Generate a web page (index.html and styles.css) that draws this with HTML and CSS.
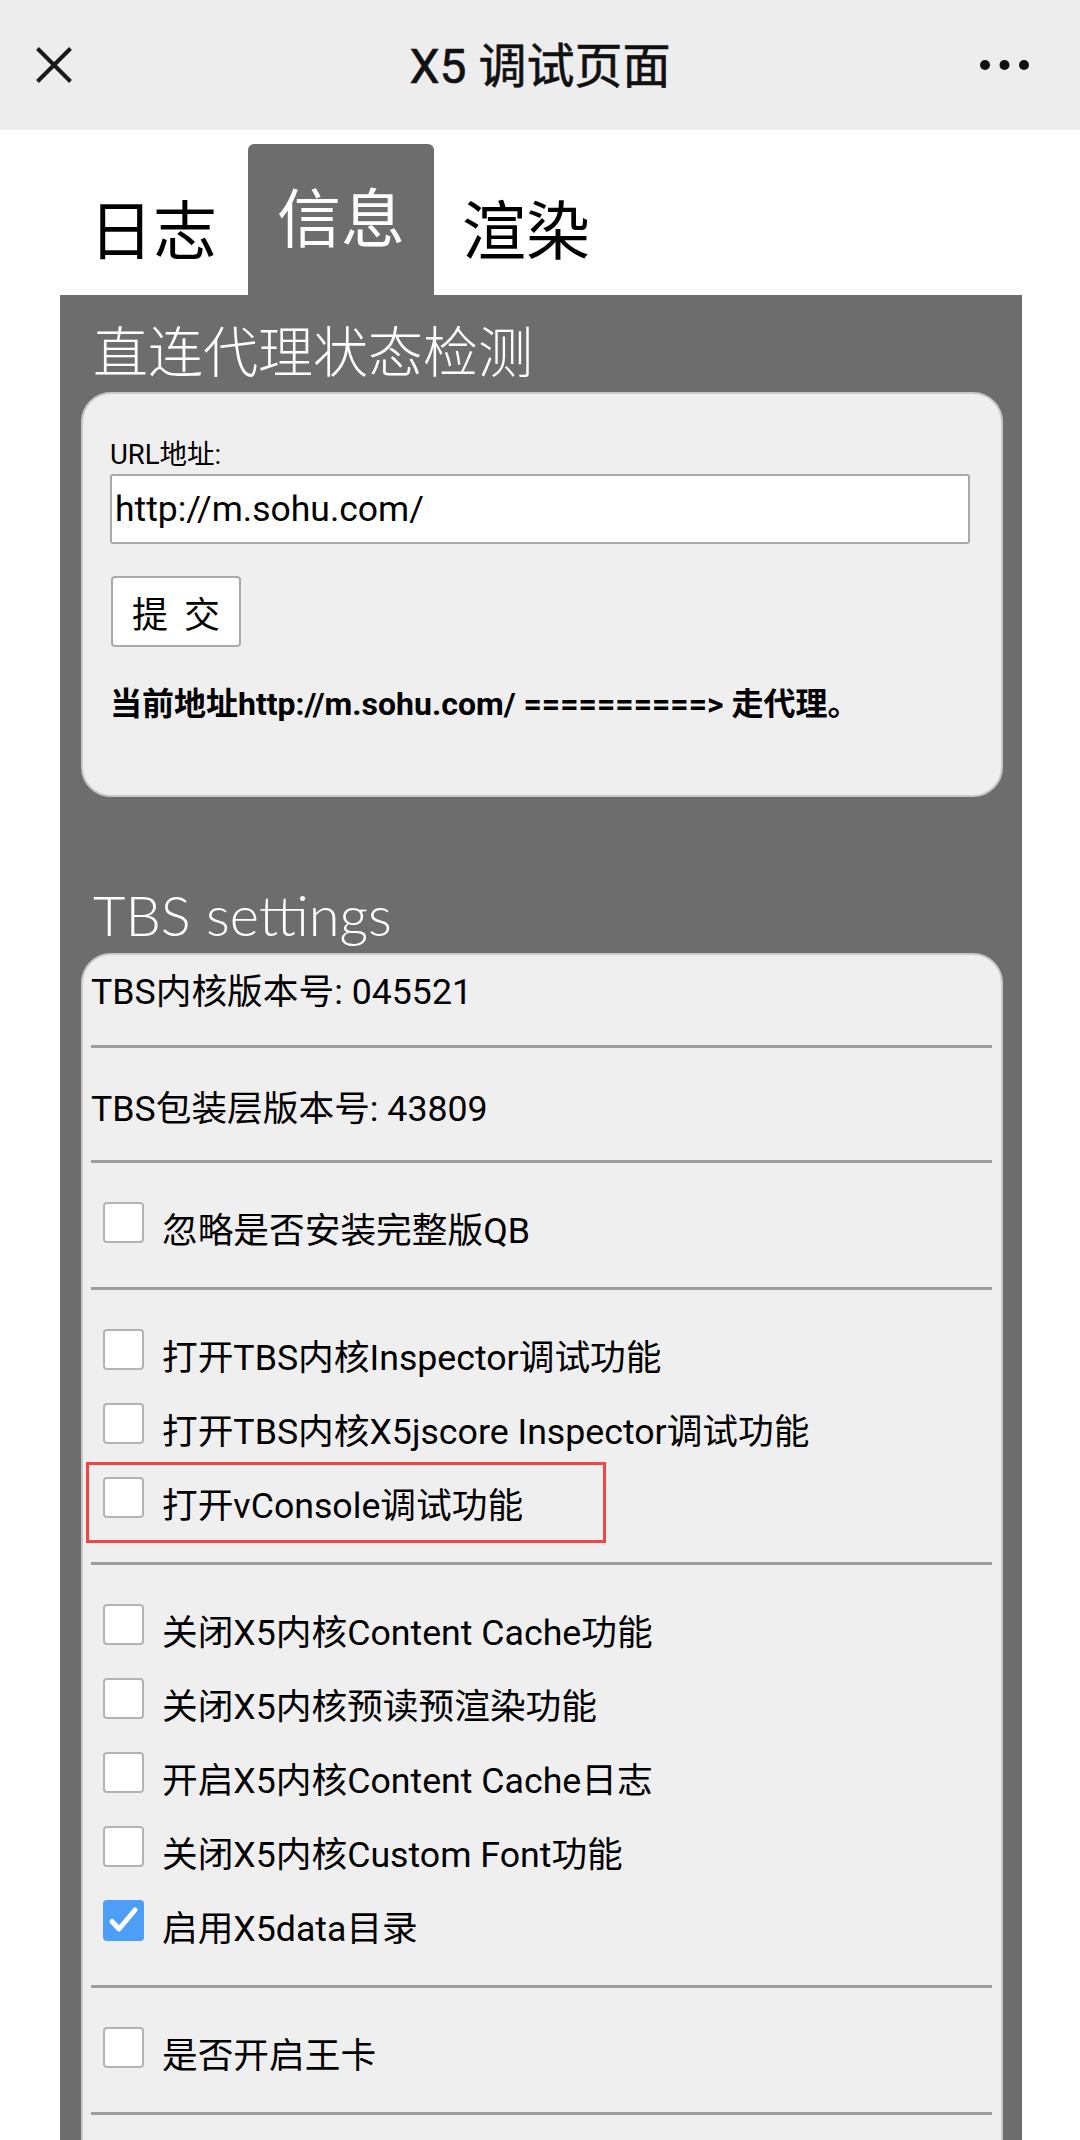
FILE: index.html
```html
<!DOCTYPE html>
<html lang="zh-CN">
<head>
<meta charset="utf-8">
<title>X5 调试页面</title>
<link rel="stylesheet" href="styles.css">
</head>
<body>
<header class="topbar">
  <span class="bar-icon close-icon">
    <svg width="36" height="36" viewBox="0 0 36 36"><path d="M1.5 1.5 L34.5 34.5 M34.5 1.5 L1.5 34.5" stroke="#1a1a1a" stroke-width="4" fill="none"/></svg>
  </span>
  <h1 class="title">X5 调试页面</h1>
  <span class="bar-icon more-icon">
    <svg width="49" height="12" viewBox="0 0 49 12"><circle cx="5" cy="6" r="5" fill="#111"/><circle cx="24.5" cy="6" r="5" fill="#111"/><circle cx="44" cy="6" r="5" fill="#111"/></svg>
  </span>
</header>

<main class="page">
  <nav class="tabs">
    <span class="tab">日志</span>
    <span class="tab active">信息</span>
    <span class="tab">渲染</span>
  </nav>

  <section class="panel">
    <h2 class="panel-title">直连代理状态检测</h2>
    <div class="card form-card">
      <label class="field-label" for="url">URL地址:</label>
      <input id="url" class="url-input" type="text" value="http://m.sohu.com/">
      <button class="submit" type="button">提 交</button>
      <p class="result">当前地址http://m.sohu.com/ ==========&gt; 走代理。</p>
    </div>

    <h2 class="panel-title latin spaced">TBS settings</h2>
    <div class="card settings-card">
      <div class="info-row lead">TBS内核版本号: 045521</div>
      <hr class="rule">
      <div class="info-row">TBS包装层版本号: 43809</div>
      <hr class="rule">
      <div class="group">
        <div class="check-row"><span class="box"></span>忽略是否安装完整版QB</div>
      </div>
      <hr class="rule">
      <div class="group">
        <div class="check-row"><span class="box"></span>打开TBS内核Inspector调试功能</div>
        <div class="check-row"><span class="box"></span>打开TBS内核X5jscore Inspector调试功能</div>
        <div class="check-row"><span class="box"></span>打开vConsole调试功能<span class="mark"></span></div>
      </div>
      <hr class="rule">
      <div class="group">
        <div class="check-row"><span class="box"></span>关闭X5内核Content Cache功能</div>
        <div class="check-row"><span class="box"></span>关闭X5内核预读预渲染功能</div>
        <div class="check-row"><span class="box"></span>开启X5内核Content Cache日志</div>
        <div class="check-row"><span class="box"></span>关闭X5内核Custom Font功能</div>
        <div class="check-row"><span class="box checked"><svg width="41" height="41" viewBox="0 0 41 41"><path d="M9 21.5 L16 29 L32 10" stroke="#fff" stroke-width="5" fill="none" stroke-linecap="round" stroke-linejoin="round"/></svg></span>启用X5data目录</div>
      </div>
      <hr class="rule">
      <div class="group">
        <div class="check-row"><span class="box"></span>是否开启王卡</div>
      </div>
      <hr class="rule">
    </div>
  </section>
</main>
</body>
</html>
```

FILE: styles.css
```css
* {
  box-sizing: border-box;
}

html, body {
  margin: 0;
  padding: 0;
  background: #ffffff;
}

body {
  font-family: Roboto, "Noto Sans CJK SC", sans-serif;
  color: #000;
}

/* ---------- top bar ---------- */
.topbar {
  height: 130px;
  background: #ededed;
  display: grid;
  grid-template-columns: 1fr auto 1fr;
  align-items: center;
  padding: 0 36px;
}

.bar-icon {
  display: flex;
  align-items: center;
}

.bar-icon svg {
  display: block;
}

.close-icon {
  justify-self: start;
}

.more-icon {
  justify-self: end;
  margin-right: 15px;
}

.title {
  margin: 0;
  font-size: 48px;
  font-weight: 400;
  color: #111;
  line-height: 1;
  padding-top: 4px;
  -webkit-text-stroke: 0.6px #111;
}

/* ---------- page ---------- */
.page {
  padding: 0 58px 0 60px;
}

.tabs {
  display: flex;
  align-items: flex-end;
  gap: 2px;
  height: 165px;
}

.tab {
  font-size: 64px;
  line-height: 64px;
  padding: 0 29px 30px;
  color: #000;
}

.tab.active {
  background: #6d6d6d;
  color: #fff;
  padding: 45px 29px 42px;
  border-radius: 6px 6px 0 0;
}

.tab.active + .tab {
  padding-left: 26px;
}

.panel {
  background: #6d6d6d;
  padding: 31px 19px 0 21px;
}

.panel-title {
  margin: 0 0 11px 12px;
  font-size: 55px;
  line-height: 55px;
  font-weight: 300;
  color: #fff;
}

.panel-title.latin {
  font-family: Lato, Roboto, "Noto Sans CJK SC", sans-serif;
  font-weight: 300;
  font-size: 56px;
}

.panel-title.spaced {
  margin-top: 90px;
}

.card {
  background: #efefef;
  border: 2px solid #c8c8c8;
  border-radius: 30px;
}

/* ---------- form card ---------- */
.form-card {
  padding: 44px 31px 71px 27px;
}

.field-label {
  display: block;
  font-size: 27.5px;
  line-height: 34px;
  margin-bottom: 2px;
}

.url-input {
  display: block;
  width: 100%;
  height: 70px;
  margin: 0;
  padding: 0 3px;
  border: 2px solid #a9a9a9;
  border-radius: 3px;
  background: #fff;
  font-family: Roboto, "Noto Sans CJK SC", sans-serif;
  font-size: 35.5px;
  color: #000;
  outline: none;
}

.submit {
  display: block;
  margin: 32px 0 0 1px;
  width: 130px;
  height: 71px;
  padding: 0;
  border: 2px solid #a9a9a9;
  border-radius: 4px;
  background: #fff;
  font-family: Roboto, "Noto Sans CJK SC", sans-serif;
  font-size: 36px;
  word-spacing: 7px;
  color: #000;
}

.result {
  margin: 37px 0 0;
  font-size: 32px;
  line-height: 40px;
  font-weight: 700;
}

/* ---------- settings card ---------- */
.settings-card {
  padding: 0 9px 90px 8px;
  border-bottom-left-radius: 0;
  border-bottom-right-radius: 0;
}

.info-row {
  font-size: 35.7px;
  line-height: 74px;
  padding: 24px 0 14px;
}

.info-row.lead {
  padding: 0 0 16px;
}

.rule {
  margin: 0;
  height: 0;
  border: 0;
  border-top: 3px solid #9d9d9d;
}

.group {
  padding: 31px 0 19px;
}

.check-row {
  position: relative;
  font-size: 35.7px;
  line-height: 74px;
  padding-left: 12px;
  white-space: nowrap;
}

.box {
  display: inline-block;
  vertical-align: baseline;
  width: 41px;
  height: 41px;
  margin-right: 18px;
  border: 2px solid #b3b3b3;
  border-radius: 4px;
  background: #fff;
}

.box.checked {
  border: 0;
  background: #4d9ef7;
}

.box.checked svg {
  display: block;
}

.mark {
  position: absolute;
  left: -5px;
  top: -7px;
  bottom: 0;
  width: 520px;
  border: 3px solid #f44545;
}
```
